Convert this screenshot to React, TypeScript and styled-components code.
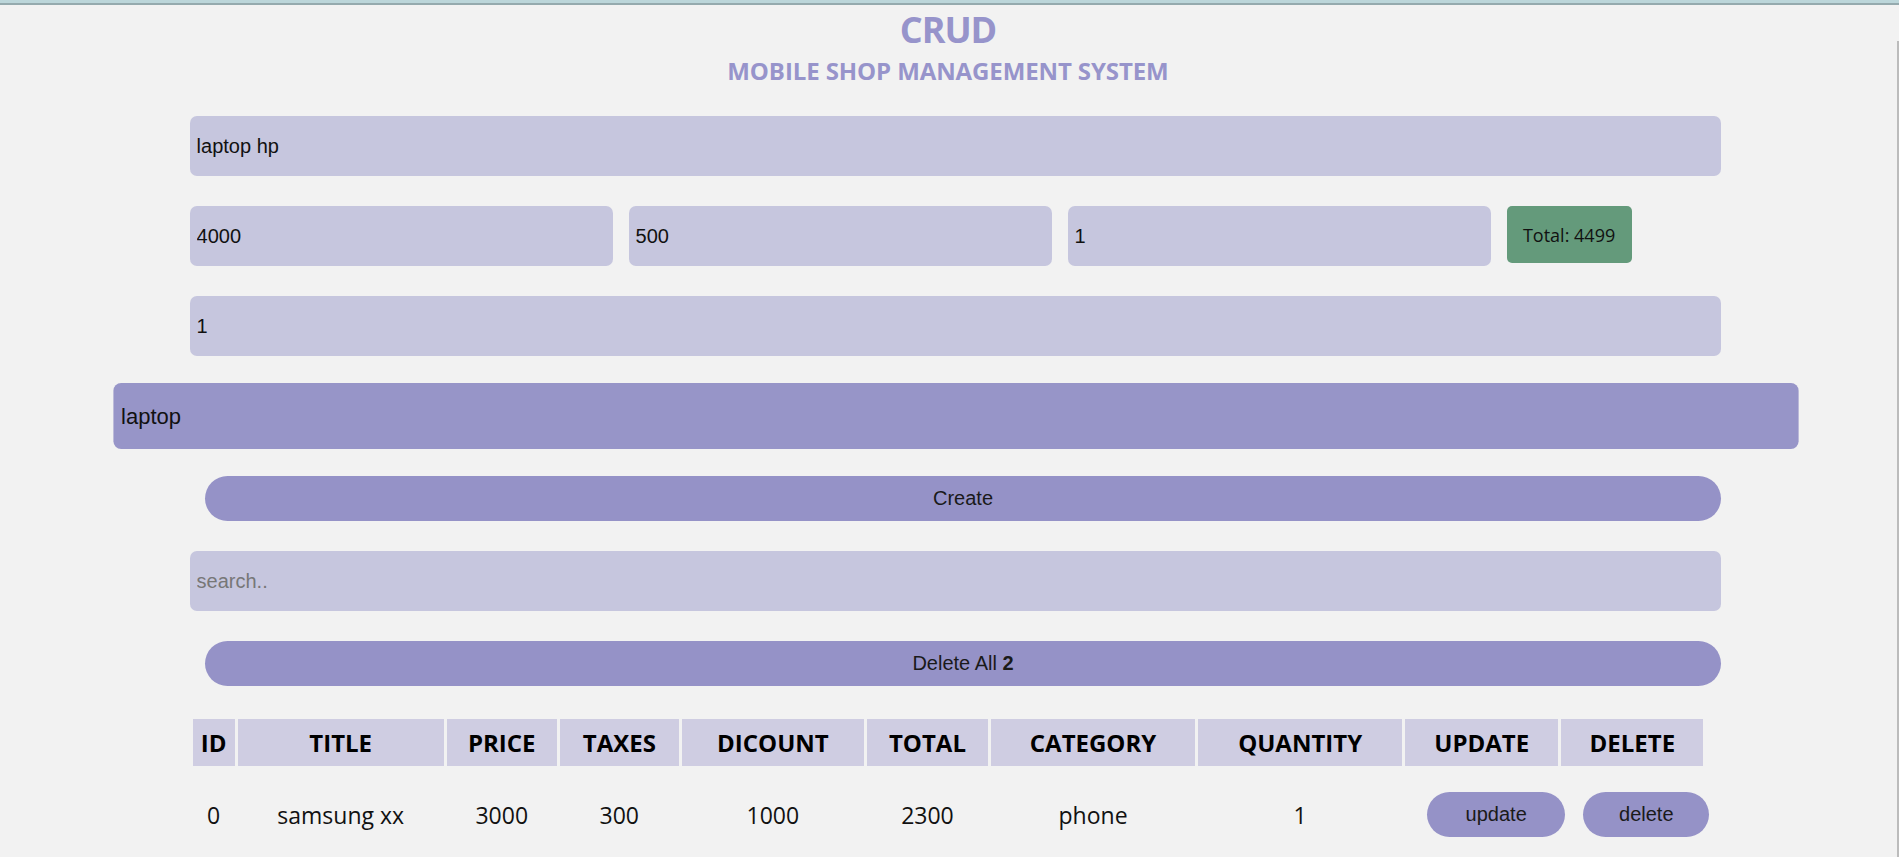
import styled, { createGlobalStyle } from "styled-components";

const GlobalStyle = createGlobalStyle`
	* {
		box-sizing: border-box;
	}
	html, body {
		margin: 0;
		padding: 0;
		background: #f2f2f2;
		overflow: hidden;
	}
	body {
		font-family: "Open Sans", "Noto Sans", sans-serif;
	}
`;

const TopStrip = styled.div`
	height: 5px;
	background: #bcd6da;
	border-bottom: 2px solid #95aaae;
`;

const ScrollEdge = styled.div`
	position: fixed;
	top: 41px;
	right: 0;
	bottom: 0;
	width: 2px;
	background: #bcbcbc;
`;

const Page = styled.div`
	width: 1896px;
`;

const Crud = styled.div`
	width: 80%;
	margin: 0 auto;
`;

const Head = styled.div`
	text-align: center;
	text-transform: uppercase;
	color: #9794cb;
`;

const Title = styled.h1`
	margin: 0;
	font-size: 36px;
	font-weight: 700;
	letter-spacing: -1px;
	line-height: 49px;
`;

const SubTitle = styled.h2`
	margin: 0;
	font-size: 24px;
	font-weight: 700;
	line-height: 33px;
	letter-spacing: -0.1px;
`;

const Form = styled.div`
	margin-top: 29px;
	display: flex;
	flex-direction: column;
	align-items: flex-start;
	gap: 30px;
`;

const Input = styled.input<{ $w?: number; $active?: boolean }>`
	width: ${(p) => (p.$w ? `${p.$w}px` : "calc(100% + 15px)")};
	height: 60px;
	flex-shrink: 0;
	border: none;
	outline: none;
	border-radius: 7px;
	padding: 0 7px;
	font-family: "Liberation Sans", Arial, sans-serif;
	font-size: 20px;
	color: #111;
	caret-color: #111;
	background: ${(p) => (p.$active ? "#9795c8" : "#c6c6de")};
	transform: ${(p) => (p.$active ? "scale(1.1)" : "none")};
	&::placeholder {
		color: #777;
	}
`;

const PriceRow = styled.div`
	display: flex;
	align-items: flex-start;
	gap: 16px;
`;

const TotalBadge = styled.small`
	width: 125px;
	height: 57px;
	display: flex;
	align-items: center;
	justify-content: center;
	background: #649a7b;
	border-radius: 5px;
	font-size: 18px;
	color: #111;
`;

const Button = styled.button<{ $w?: number }>`
	width: ${(p) => (p.$w ? `${p.$w}px` : "100%")};
	height: 45px;
	margin-left: 15px;
	flex-shrink: 0;
	border: none;
	border-radius: 23px;
	background: #9592c7;
	color: #1a1a1a;
	font-family: "Liberation Sans", Arial, sans-serif;
	font-size: 20px;
	cursor: pointer;
	b {
		font-weight: 700;
	}
`;

const Table = styled.table`
	width: 100%;
	margin-top: 0;
	border-spacing: 3px;
	table-layout: fixed;
	text-align: center;
`;

const Th = styled.th`
	height: 47px;
	padding: 0;
	background: #cfcde2;
	color: #000;
	font-size: 24px;
	font-weight: 700;
	text-transform: uppercase;
	white-space: nowrap;
`;

const Td = styled.td`
	padding: 23px 0;
	font-size: 23px;
	color: #111;
	white-space: nowrap;
`;

const ActionTd = styled(Td)`
	text-align: left;
	padding-left: 7px;
`;

const columns: [string, number][] = [
	["id", 42],
	["title", 206],
	["price", 110],
	["taxes", 119],
	["dicount", 182],
	["total", 121],
	["category", 204],
	["quantity", 204],
	["update", 153],
	["delete", 142],
];

const products = [
	{
		title: "samsung xx",
		price: 3000,
		taxes: 300,
		discount: 1000,
		total: 2300,
		category: "phone",
		count: 1,
	},
];

function App() {
	return (
		<>
			<GlobalStyle />
			<TopStrip />
			<ScrollEdge />
			<Page>
				<Crud>
					<Head>
						<Title>crud</Title>
						<SubTitle>mobile shop management system</SubTitle>
					</Head>
					<Form>
						<Input type="text" placeholder="title" defaultValue="laptop hp" />
						<PriceRow>
							<Input $w={423} type="number" placeholder="price" defaultValue="4000" />
							<Input $w={423} type="number" placeholder="taxes" defaultValue="500" />
							<Input $w={423} type="number" placeholder="discount" defaultValue="1" />
							<TotalBadge>Total: 4499</TotalBadge>
						</PriceRow>
						<Input type="number" placeholder="count" defaultValue="1" />
						<Input $active autoFocus type="text" placeholder="category" defaultValue="laptop" />
						<Button>Create</Button>
						<Input type="text" placeholder="search.." />
						<Button>
							Delete All <b>2</b>
						</Button>
						<Table>
							<colgroup>
								{columns.map(([name, w]) => (
									<col key={name} style={{ width: w }} />
								))}
							</colgroup>
							<thead>
								<tr>
									{columns.map(([name]) => (
										<Th key={name}>{name}</Th>
									))}
								</tr>
							</thead>
							<tbody>
								{products.map((p, i) => (
									<tr key={i}>
										<Td>{i}</Td>
										<Td>{p.title}</Td>
										<Td>{p.price}</Td>
										<Td>{p.taxes}</Td>
										<Td>{p.discount}</Td>
										<Td>{p.total}</Td>
										<Td>{p.category}</Td>
										<Td>{p.count}</Td>
										<ActionTd>
											<Button $w={138}>update</Button>
										</ActionTd>
										<ActionTd>
											<Button $w={126}>delete</Button>
										</ActionTd>
									</tr>
								))}
							</tbody>
						</Table>
					</Form>
				</Crud>
			</Page>
		</>
	);
}

export default App;
